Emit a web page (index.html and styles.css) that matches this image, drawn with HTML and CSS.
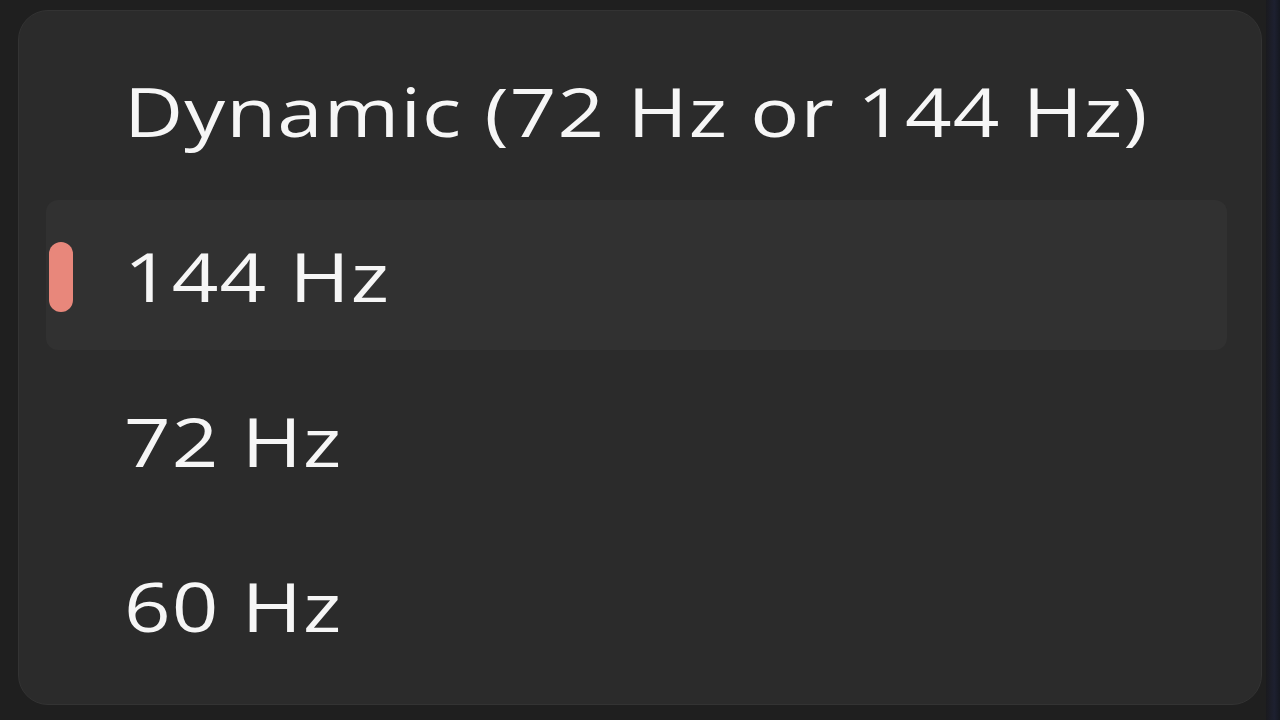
FILE: index.html
```html
<!DOCTYPE html>
<html>
<head>
<meta charset="utf-8">
<link rel="stylesheet" href="styles.css">
</head>
<body>
<div class="screen">
  <div class="menu">
    <div class="item"><span class="label">Dynamic (72 Hz or 144 Hz)</span></div>
    <div class="item selected"><span class="pill"></span><span class="label">144 Hz</span></div>
    <div class="item"><span class="label">72 Hz</span></div>
    <div class="item"><span class="label">60 Hz</span></div>
  </div>
  <div class="edge"></div>
</div>
</body>
</html>
```
FILE: styles.css
```css
html, body {
  margin: 0;
  padding: 0;
  width: 1280px;
  height: 720px;
  overflow: hidden;
  background: #1f1f1f;
}
.screen {
  display: flex;
  width: 1280px;
  height: 720px;
  padding: 10px 0 15px 18px;
  box-sizing: border-box;
}
.menu {
  width: 1244px;
  height: 695px;
  box-sizing: border-box;
  background: #2b2b2b;
  border: 1px solid #333333;
  border-radius: 30px;
  padding: 24px 34px 24px 27px;
  display: flex;
  flex-direction: column;
  gap: 15px;
}
.item {
  position: relative;
  height: 150px;
  flex: none;
  border-radius: 12px;
  display: flex;
  align-items: center;
  padding-left: 78px;
}
.item.selected {
  background: #313131;
}
.pill {
  position: absolute;
  left: 3px;
  top: 42px;
  width: 24px;
  height: 70px;
  border-radius: 12px;
  background: #e8877b;
}
.label {
  display: inline-block;
  font-family: "Open Sans", "Noto Sans", sans-serif;
  font-size: 68px;
  font-weight: 500;
  color: #f6f6f6;
  letter-spacing: 0.9px;
  transform: scaleX(1.2);
  transform-origin: left center;
  white-space: nowrap;
}
.edge {
  flex: 1;
  margin-left: 4px;
  margin-top: -10px;
  margin-bottom: -15px;
  background: linear-gradient(90deg, #1a1a1e, #1d2030 60%, #151820);
}
```
